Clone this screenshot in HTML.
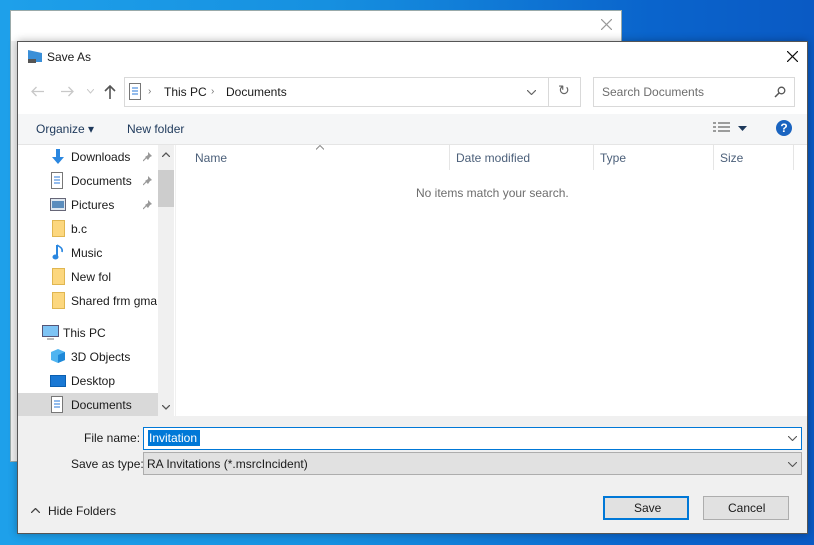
<!DOCTYPE html>
<html><head><style>
*{box-sizing:border-box;margin:0;padding:0}
body{width:814px;height:545px;overflow:hidden;position:relative;font-family:"Liberation Sans",sans-serif;font-size:12px;color:#1a1a1a;background:linear-gradient(90deg,#1ea0ea 0%,#1690e0 40%,#0a64cc 80%,#0a5ac4 100%)}
.abs{position:absolute}
.t{position:absolute;white-space:nowrap;line-height:14px}
</style></head><body>
<div class="abs" style="left:10px;top:10px;width:612px;height:452px;background:#f0f0f0;border:1px solid #9aa"></div>
<div class="abs" style="left:11px;top:11px;width:610px;height:30px;background:#fff"></div>
<svg class="abs" style="left:601px;top:19px" width="11" height="11"><path d="M0 0L11 11M11 0L0 11" stroke="#999" stroke-width="1.2"/></svg>
<div class="abs" style="left:17px;top:41px;width:791px;height:493px;background:#f0f0f0;border:1px solid #555;box-shadow:0 0 8px rgba(0,0,0,.3)"></div>
<div class="abs" style="left:18px;top:42px;width:789px;height:72px;background:#fff"></div>
<svg class="abs" style="left:27px;top:49px" width="16" height="15"><path d="M1 1 L15 4 L15 13 L1 13Z" fill="#3a8fd8"/><rect x="1" y="10" width="8" height="4" fill="#555"/></svg>
<div class="t" style="left:47px;top:50px">Save As</div>
<svg class="abs" style="left:787px;top:51px" width="11" height="11"><path d="M0 0L11 11M11 0L0 11" stroke="#111" stroke-width="1.2"/></svg>
<svg class="abs" style="left:31px;top:86px" width="14" height="11"><path d="M13 5.5H1M5.5 1L1 5.5 5.5 10" fill="none" stroke="#c8c8c8" stroke-width="1.3"/></svg>
<svg class="abs" style="left:60px;top:86px" width="14" height="11"><path d="M1 5.5H13M8.5 1L13 5.5 8.5 10" fill="none" stroke="#c8c8c8" stroke-width="1.3"/></svg>
<svg class="abs" style="left:87px;top:89px" width="7" height="5"><path d="M0 0L3.5 4 7 0" fill="none" stroke="#c8c8c8"/></svg>
<svg class="abs" style="left:104px;top:85px" width="12" height="14"><path d="M6 14V1M1 6L6 1 11 6" fill="none" stroke="#555" stroke-width="1.6"/></svg>
<div class="abs" style="left:124px;top:77px;width:457px;height:30px;border:1px solid #d9d9d9;background:#fff"></div>
<div class="abs" style="left:548px;top:77px;width:1px;height:30px;background:#d9d9d9"></div>
<svg class="abs" style="left:129px;top:83px" width="12" height="17"><rect x=".5" y=".5" width="11" height="16" fill="#fff" stroke="#777"/><path d="M3 5h6M3 8h6M3 11h6" stroke="#2a7ad8"/></svg>
<div class="t" style="left:148px;top:85px;color:#777;font-size:10px">›</div>
<div class="t" style="left:164px;top:85px">This PC</div>
<div class="t" style="left:211px;top:85px;color:#777;font-size:10px">›</div>
<div class="t" style="left:226px;top:85px">Documents</div>
<svg class="abs" style="left:527px;top:90px" width="9" height="5"><path d="M0 0L4.5 4.5 9 0" fill="none" stroke="#666" stroke-width="1.2"/></svg>
<div class="t" style="left:558px;top:83px;color:#666;font-size:14px">↻</div>
<div class="abs" style="left:593px;top:77px;width:202px;height:30px;border:1px solid #d9d9d9;background:#fff"></div>
<div class="t" style="left:602px;top:85px;color:#6d6d6d">Search Documents</div>
<svg class="abs" style="left:774px;top:86px" width="12" height="12"><circle cx="7.5" cy="4.5" r="3.3" fill="none" stroke="#555" stroke-width="1.3"/><path d="M5 7L1 11" stroke="#555" stroke-width="1.5"/></svg>
<div class="abs" style="left:18px;top:114px;width:789px;height:31px;background:#f5f6f7;border-bottom:1px solid #e5e5e5"></div>
<div class="t" style="left:36px;top:122px;color:#1e395b">Organize ▾</div>
<div class="t" style="left:127px;top:122px;color:#1e395b">New folder</div>
<svg class="abs" style="left:713px;top:122px" width="18" height="12"><path d="M0 1h3M0 5h3M0 9h3M5 1h12M5 5h12M5 9h12" stroke="#666" stroke-width="1.2"/></svg>
<svg class="abs" style="left:738px;top:126px" width="9" height="5"><path d="M0 0h9L4.5 5z" fill="#1e395b"/></svg>
<div class="abs" style="left:776px;top:120px;width:16px;height:16px;border-radius:50%;background:#1a64c0;color:#fff;font-weight:bold;font-size:12px;text-align:center;line-height:16px">?</div>
<div class="abs" style="left:18px;top:145px;width:157px;height:271px;background:#fff"></div>
<div class="abs" style="left:158px;top:145px;width:16px;height:271px;background:#f0f0f0"></div>
<div class="abs" style="left:158px;top:170px;width:16px;height:37px;background:#cdcdcd"></div>
<svg class="abs" style="left:162px;top:152px" width="8" height="5"><path d="M0 5L4 1 8 5" fill="none" stroke="#555" stroke-width="1.3"/></svg>
<svg class="abs" style="left:162px;top:405px" width="8" height="5"><path d="M0 0L4 4 8 0" fill="none" stroke="#555" stroke-width="1.3"/></svg>
<div class="abs" style="left:18px;top:393px;width:140px;height:23px;background:#d9d9d9"></div>
<svg width="0" height="0" style="position:absolute"><defs><g id="pin"><path d="M5 1l4 4-2 1-2 3-3-3 3-2z" fill="#999"/><path d="M3 7L0 10" stroke="#999" stroke-width="1.2"/></g></defs></svg>
<svg class="abs" style="left:143px;top:151px" width="10" height="11"><use href="#pin"/></svg>
<svg class="abs" style="left:143px;top:175px" width="10" height="11"><use href="#pin"/></svg>
<svg class="abs" style="left:143px;top:199px" width="10" height="11"><use href="#pin"/></svg>
<svg class="abs" style="left:50px;top:149px" width="16" height="16"><path d="M6 0h4v8h4l-6 7-6-7h4z" fill="#2b87e0"/></svg>
<div class="t" style="left:71px;top:150px">Downloads</div>
<svg class="abs" style="left:51px;top:172px" width="12" height="17"><rect x=".5" y=".5" width="11" height="16" fill="#fff" stroke="#777"/><path d="M3 5h6M3 8h6M3 11h6" stroke="#2a7ad8"/></svg>
<div class="t" style="left:71px;top:174px">Documents</div>
<svg class="abs" style="left:50px;top:198px" width="16" height="13"><rect x=".5" y=".5" width="15" height="12" fill="#dfe8f0" stroke="#667"/><rect x="2" y="3" width="12" height="7" fill="#5b8dbd"/></svg>
<div class="t" style="left:71px;top:198px">Pictures</div>
<div class="abs" style="left:52px;top:220px;width:13px;height:17px;background:#fcd77e;border:1px solid #e0b650"></div>
<div class="t" style="left:71px;top:222px">b.c</div>
<svg class="abs" style="left:52px;top:244px" width="12" height="17"><path d="M5 1v11" stroke="#2b87e0" stroke-width="2"/><ellipse cx="3.5" cy="13" rx="3" ry="2.5" fill="#2b87e0"/><path d="M5 1c3 2 6 3 5 7" fill="none" stroke="#2b87e0" stroke-width="1.6"/></svg>
<div class="t" style="left:71px;top:246px">Music</div>
<div class="abs" style="left:52px;top:268px;width:13px;height:17px;background:#fcd77e;border:1px solid #e0b650"></div>
<div class="t" style="left:71px;top:270px">New fol</div>
<div class="abs" style="left:52px;top:292px;width:13px;height:17px;background:#fcd77e;border:1px solid #e0b650"></div>
<div class="t" style="left:71px;top:294px;width:86px;overflow:hidden">Shared frm gmail</div>
<svg class="abs" style="left:42px;top:325px" width="17" height="15"><rect x=".5" y=".5" width="16" height="11" fill="#7ec4f5" stroke="#557"/><path d="M5 14h7" stroke="#777"/></svg>
<div class="t" style="left:63px;top:326px">This PC</div>
<svg class="abs" style="left:50px;top:348px" width="16" height="16"><path d="M8 1l7 3v8l-7 3-7-3V4z" fill="#4fb4f0"/><path d="M8 7v8l7-3V4z" fill="#1e88d8"/></svg>
<div class="t" style="left:71px;top:350px">3D Objects</div>
<div class="abs" style="left:50px;top:375px;width:16px;height:12px;background:#1978d4;border:1px solid #0b5fb0"></div>
<div class="t" style="left:71px;top:374px">Desktop</div>
<svg class="abs" style="left:51px;top:396px" width="12" height="17"><rect x=".5" y=".5" width="11" height="16" fill="#fff" stroke="#777"/><path d="M3 5h6M3 8h6M3 11h6" stroke="#2a7ad8"/></svg>
<div class="t" style="left:71px;top:398px">Documents</div>
<div class="abs" style="left:176px;top:145px;width:631px;height:271px;background:#fff"></div>
<svg class="abs" style="left:316px;top:145px" width="8" height="5"><path d="M0 4.5L4 .5 8 4.5" fill="none" stroke="#888"/></svg>
<div class="t" style="left:195px;top:151px;color:#4c607a">Name</div>
<div class="abs" style="left:449px;top:145px;width:1px;height:25px;background:#e5e5e5"></div>
<div class="t" style="left:456px;top:151px;color:#4c607a">Date modified</div>
<div class="abs" style="left:593px;top:145px;width:1px;height:25px;background:#e5e5e5"></div>
<div class="t" style="left:600px;top:151px;color:#4c607a">Type</div>
<div class="abs" style="left:713px;top:145px;width:1px;height:25px;background:#e5e5e5"></div>
<div class="t" style="left:720px;top:151px;color:#4c607a">Size</div>
<div class="abs" style="left:793px;top:145px;width:1px;height:25px;background:#e5e5e5"></div>
<div class="t" style="left:416px;top:186px;color:#6d6d6d">No items match your search.</div>
<div class="t" style="left:84px;top:431px">File name:</div>
<div class="abs" style="left:143px;top:427px;width:659px;height:23px;border:1px solid #0078d7;background:#fff"></div>
<div class="abs" style="left:148px;top:430px;width:52px;height:16px;background:#0078d7"></div>
<div class="t" style="left:149px;top:431px;color:#fff">Invitation</div>
<svg class="abs" style="left:788px;top:436px" width="9" height="5"><path d="M0 0L4.5 4.5 9 0" fill="none" stroke="#555" stroke-width="1.1"/></svg>
<div class="t" style="left:71px;top:457px">Save as type:</div>
<div class="abs" style="left:143px;top:452px;width:659px;height:23px;border:1px solid #adadad;background:#e1e1e1"></div>
<div class="t" style="left:147px;top:457px">RA Invitations (*.msrcIncident)</div>
<svg class="abs" style="left:788px;top:462px" width="9" height="5"><path d="M0 0L4.5 4.5 9 0" fill="none" stroke="#555" stroke-width="1.1"/></svg>
<svg class="abs" style="left:31px;top:508px" width="9" height="5"><path d="M0 5L4.5 .5 9 5" fill="none" stroke="#444" stroke-width="1.3"/></svg>
<div class="t" style="left:48px;top:504px">Hide Folders</div>
<div class="abs" style="left:603px;top:496px;width:86px;height:24px;border:2px solid #0078d7;background:#e1e1e1"></div>
<div class="t" style="left:634px;top:501px">Save</div>
<div class="abs" style="left:703px;top:496px;width:86px;height:24px;border:1px solid #adadad;background:#e1e1e1"></div>
<div class="t" style="left:728px;top:501px">Cancel</div>
</body></html>
